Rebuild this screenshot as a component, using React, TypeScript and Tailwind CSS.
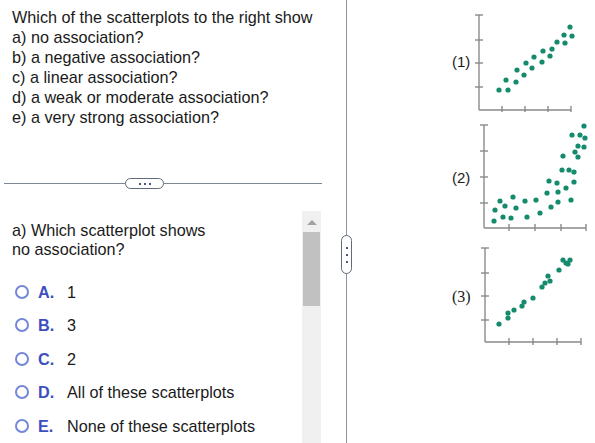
import React from 'react';

type Pt = [number, number];

const PLOT1: Pt[] = [
  [499, 90], [508, 90], [506, 80], [516, 82], [517, 70], [524, 75], [526, 63], [532, 68], [534, 57],
  [542, 62], [543, 51], [550, 56], [552, 49], [557, 42], [565, 43], [564, 35], [572, 36], [570, 27],
];

const PLOT2: Pt[] = [
  [494, 221], [495, 210], [503, 217], [500, 201], [505, 206], [511, 218], [513, 197], [516, 208],
  [525, 201], [527, 217], [536, 200], [540, 213], [547, 193], [549, 181], [551, 207], [557, 183],
  [558, 192], [558, 202], [562, 170], [563, 156], [566, 188], [569, 170], [571, 200], [574, 172],
  [574, 182], [572, 135], [575, 152], [578, 146], [578, 157], [580, 135], [584, 126], [585, 138], [584, 147],
];

const PLOT3: Pt[] = [
  [499, 324], [508, 313], [508, 318], [514, 310], [522, 306], [524, 302], [533, 298], [542, 287],
  [545, 283], [548, 276], [550, 281], [559, 270], [563, 260], [566, 263], [568, 264], [570, 260],
];

interface PlotProps {
  view: [number, number, number, number];
  axisX: number;
  axisTop: number;
  axisY: number;
  axisRight: number;
  yTicks: number[];
  xTicks: number[];
  dots: Pt[];
}

const Plot: React.FC<PlotProps> = ({ view, axisX, axisTop, axisY, axisRight, yTicks, xTicks, dots }) => (
  <svg width={view[2]} height={view[3]} viewBox={view.join(' ')}>
    <g stroke="#8a8a8a" strokeWidth="1.4">
      <line x1={axisX} y1={axisTop} x2={axisX} y2={axisY} />
      <line x1={axisX} y1={axisY} x2={axisRight} y2={axisY} />
      {yTicks.map(y => (
        <line key={'y' + y} x1={axisX - 4} y1={y} x2={axisX + 4} y2={y} />
      ))}
      {xTicks.map(x => (
        <line key={'x' + x} x1={x} y1={axisY - 4} x2={x} y2={axisY + 3} />
      ))}
    </g>
    <g fill="#168a6c">
      {dots.map(([x, y], i) => (
        <circle key={i} cx={x} cy={y} r="2.6" />
      ))}
    </g>
  </svg>
);

const OPTIONS = [
  { key: 'A.', text: '1' },
  { key: 'B.', text: '3' },
  { key: 'C.', text: '2' },
  { key: 'D.', text: 'All of these scatterplots' },
  { key: 'E.', text: 'None of these scatterplots' },
];

export default function App() {
  return (
    <div className="relative flex h-[443px] w-[595px] overflow-hidden bg-white font-['Liberation_Sans',Arial,sans-serif] text-[#1a1a1a]">
      <div className="flex w-[346px] flex-col">
        <div className="h-[178px] pl-3 pt-[7px] text-[16.2px] leading-[20px]">
          <p>Which of the scatterplots to the right show</p>
          <p>a) no association?</p>
          <p>b) a negative association?</p>
          <p>c) a linear association?</p>
          <p>d) a weak or moderate association?</p>
          <p>e) a very strong association?</p>
        </div>

        <div className="ml-[4px] flex h-[11px] w-[318px] items-center">
          <div className="h-px w-[121px] bg-[#7d8893]" />
          <div className="flex h-[11px] w-[39px] items-center justify-center gap-[3px] rounded-full border border-[#5f6b78] bg-white">
            <span className="h-[2px] w-[2px] bg-[#4a5a78]" />
            <span className="h-[2px] w-[2px] bg-[#4a5a78]" />
            <span className="h-[2px] w-[2px] bg-[#4a5a78]" />
          </div>
          <div className="h-px flex-1 bg-[#7d8893]" />
        </div>

        <div className="mt-[22px] flex flex-1">
          <div className="w-[302px] pl-3 pt-[10px]">
            <div className="text-[16.2px] leading-[19px]">
              <p>a) Which scatterplot shows</p>
              <p>no association?</p>
            </div>
            <div className="mt-[16px]">
              {OPTIONS.map(o => (
                <div key={o.key} className="flex h-[33.5px] items-center text-[16.2px]">
                  <span className="ml-[3px] h-[14px] w-[14px] rounded-full border-2 border-[#7487d8]" />
                  <span className="ml-[9px] w-[29px] font-bold text-[#3d4fbf]">{o.key}</span>
                  <span>{o.text}</span>
                </div>
              ))}
            </div>
          </div>
          <div className="flex w-[19px] flex-col items-center bg-[#f0f0f0]">
            <div className="mt-[9px] h-0 w-0 border-x-[5px] border-b-[5px] border-x-transparent border-b-[#a3a3a3]" />
            <div className="mt-[7px] h-[74px] w-[17px] bg-[#c1c1c1]" />
          </div>
        </div>
      </div>

      <div className="relative w-px bg-[#8c96a3]">
        <div className="absolute left-[-5px] top-[235px] flex h-[39px] w-[11px] flex-col items-center justify-center gap-[5px] rounded-full border border-[#5f6b78] bg-white">
          <span className="h-[2px] w-[2px] bg-[#4a5a78]" />
          <span className="h-[2px] w-[2px] bg-[#4a5a78]" />
          <span className="h-[2px] w-[2px] bg-[#4a5a78]" />
        </div>
      </div>

      <div className="flex flex-1 flex-col pl-[105px] pt-[12px] text-[15px]">
        <div className="flex h-[100px] items-center">
          <span className="w-[22px]">(1)</span>
          <Plot view={[474, 12, 118, 100]} axisX={479} axisTop={15} axisY={110} axisRight={571}
            yTicks={[15, 40, 63, 87]} xTicks={[502, 525, 548, 571]} dots={PLOT1} />
        </div>
        <div className="mt-[10px] flex h-[112px] items-center">
          <span className="w-[22px]">(2)</span>
          <Plot view={[474, 122, 118, 112]} axisX={484} axisTop={125} axisY={228} axisRight={586}
            yTicks={[125, 151, 177, 203]} xTicks={[509, 535, 561, 586]} dots={PLOT2} />
        </div>
        <div className="mt-[12px] flex h-[102px] items-center">
          <span className="w-[22px] font-['Liberation_Serif',serif] text-[16px]">(3)</span>
          <Plot view={[474, 246, 118, 102]} axisX={485} axisTop={248} axisY={342} axisRight={581}
            yTicks={[248, 273, 296, 320]} xTicks={[509, 533, 557, 581]} dots={PLOT3} />
        </div>
      </div>
    </div>
  );
}
